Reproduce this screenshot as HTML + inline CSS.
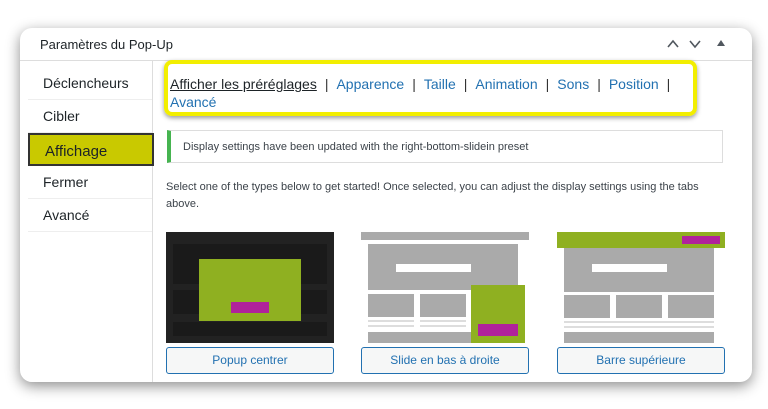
<!DOCTYPE html>
<html><head><meta charset="utf-8"><style>
body{margin:0;width:768px;height:409px;background:#fff;font-family:"Liberation Sans",sans-serif;overflow:hidden;position:relative}
.card{position:absolute;left:20px;top:28px;width:732px;height:354px;background:#fff;border-radius:12px;box-shadow:0 4px 14px rgba(0,0,0,.45);overflow:hidden}
.hd{position:absolute;left:0;top:0;right:0;height:32px;border-bottom:1px solid #ddd;font-size:13px;color:#1d2327}
.hd span{position:absolute;left:20px;top:9px}
.side{position:absolute;left:8px;top:33px;width:124px;bottom:0;border-right:1px solid #ddd;background:#fff}
.it{height:33px;border-bottom:1px solid #eee;font-size:14px;color:#1d2327;padding-left:15px;line-height:33px;box-sizing:border-box}
.sel{background:#c9c900;border:2px solid #333;margin-right:-2px;font-size:15px}
.yb{position:absolute;left:144px;top:32px;width:533px;height:56px;border:4px solid #f2ee00;border-radius:8px;box-shadow:0 2px 5px rgba(0,0,0,.4);box-sizing:border-box}
.tabs{position:absolute;left:150px;top:47px;width:530px;font-size:14px;color:#2271b1;line-height:18px}
.tabs b{font-weight:normal;color:#1d2327;text-decoration:underline}
.tabs i{font-style:normal;color:#333;margin:0 8px}
.note{position:absolute;left:147px;top:102px;width:556px;height:33px;border:1px solid #ddd;border-left:4px solid #46b450;box-sizing:border-box;font-size:11px;color:#3c434a;padding:10px 0 0 12px}
.txt{position:absolute;left:146px;top:151px;width:545px;font-size:11px;color:#3c434a;line-height:17px}
.im{position:absolute;top:204px;width:168px;height:111px}
.btn{position:absolute;top:319px;width:166px;height:25px;border:1px solid #2271b1;border-radius:3px;background:#f6f7f7;font-size:12px;color:#2271b1;text-align:center;line-height:25px}
</style></head><body>
<div class="card">
<div class="hd"><span>Paramètres du Pop-Up</span>
<svg style="position:absolute;left:646px;top:10px" width="40" height="12" viewBox="0 0 40 12"><path d="M2 9 L7 3 L12 9 M24 3 L29 9 L34 3" fill="none" stroke="#50575e" stroke-width="1.6"/></svg>
<svg style="position:absolute;left:697px;top:12px" width="8" height="6" viewBox="0 0 8 6"><path d="M0 6 L4 0 L8 6Z" fill="#50575e"/></svg></div>
<div class="side">
<div class="it" style="margin-top:6px">Déclencheurs</div>
<div class="it">Cibler</div>
<div class="it sel">Affichage</div>
<div class="it">Fermer</div>
<div class="it">Avancé</div>
</div>
<div class="yb"></div>
<div class="tabs"><b>Afficher les préréglages</b><i>|</i>Apparence<i>|</i>Taille<i>|</i>Animation<i>|</i>Sons<i>|</i>Position<i>|</i><br>Avancé</div>
<div class="note">Display settings have been updated with the right-bottom-slidein preset</div>
<div class="txt">Select one of the types below to get started! Once selected, you can adjust the display settings using the tabs above.</div>
<svg class="im" style="left:146px" viewBox="0 0 168 111"><rect width="168" height="111" fill="#222"/><rect x="7" y="12" width="154" height="40" fill="#1a1a1a"/><rect x="7" y="58" width="154" height="24" fill="#1a1a1a"/><rect x="7" y="90" width="154" height="14" fill="#1a1a1a"/><rect x="33" y="27" width="102" height="62" fill="#8fb021"/><rect x="65" y="70" width="38" height="11" fill="#b0229b"/></svg>
<svg class="im" style="left:341px" viewBox="0 0 168 111"><rect width="168" height="111" fill="#fff"/><rect width="168" height="8" fill="#aaa"/><rect x="7" y="12" width="150" height="46" fill="#aaa"/><rect x="35" y="32" width="75" height="8" fill="#fff"/><rect x="7" y="62" width="46" height="23" fill="#aaa"/><rect x="59" y="62" width="46" height="23" fill="#aaa"/><g fill="#ddd"><rect x="7" y="88" width="46" height="2"/><rect x="7" y="93" width="46" height="2"/><rect x="59" y="88" width="46" height="2"/><rect x="59" y="93" width="46" height="2"/></g><rect x="7" y="100" width="150" height="11" fill="#aaa"/><rect x="110" y="53" width="54" height="58" fill="#8fb021"/><rect x="117" y="92" width="40" height="12" fill="#b0229b"/></svg>
<svg class="im" style="left:537px" viewBox="0 0 168 111"><rect width="168" height="111" fill="#fff"/><rect x="7" y="16" width="150" height="44" fill="#aaa"/><rect x="35" y="32" width="75" height="8" fill="#fff"/><rect width="168" height="16" fill="#8fb021"/><rect x="125" y="4" width="38" height="8" fill="#b0229b"/><rect x="7" y="63" width="46" height="23" fill="#aaa"/><rect x="59" y="63" width="46" height="23" fill="#aaa"/><rect x="111" y="63" width="46" height="23" fill="#aaa"/><g fill="#ddd"><rect x="7" y="89" width="150" height="2"/><rect x="7" y="94" width="150" height="2"/></g><rect x="7" y="100" width="150" height="11" fill="#aaa"/></svg>
<div class="btn" style="left:146px">Popup centrer</div>
<div class="btn" style="left:341px">Slide en bas à droite</div>
<div class="btn" style="left:537px">Barre supérieure</div>
</div>
</body></html>
